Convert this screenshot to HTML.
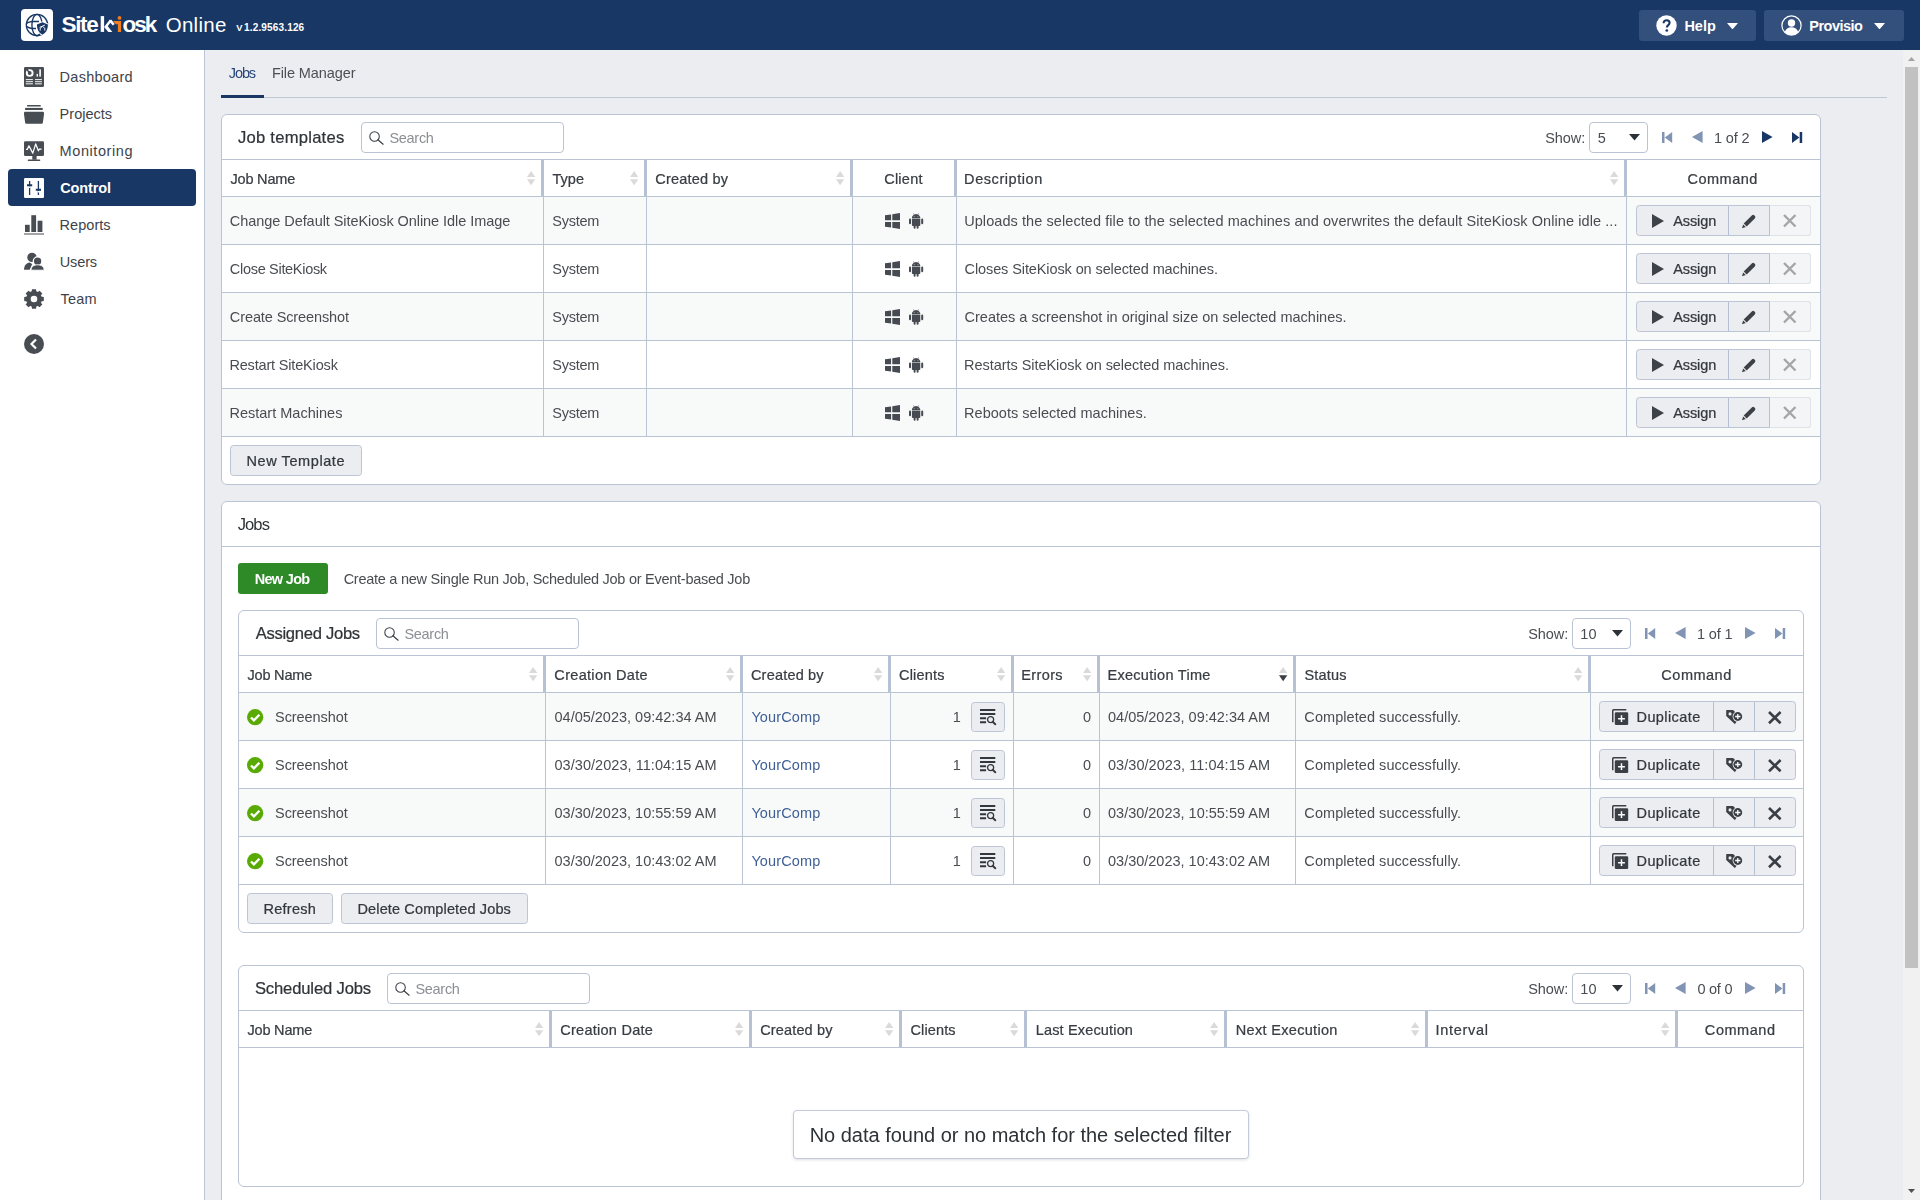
<!DOCTYPE html>
<html>
<head>
<meta charset="utf-8">
<title>SiteKiosk Online</title>
<style>
*{box-sizing:border-box;margin:0;padding:0}
html,body{width:1920px;height:1200px;overflow:hidden}
body{font-family:"Liberation Sans",sans-serif;font-size:14px;color:#494d52;background:#ecedf1;position:relative;letter-spacing:.35px}
svg{display:block}
.abs{position:absolute}
/* header */
#hdr{position:absolute;left:0;top:0;width:1920px;height:50px;background:#193765}
#logo{position:absolute;left:21px;top:9px;width:32px;height:32px;background:#fff;border-radius:4px}
.hbtn{position:absolute;background:#334f7b;border-radius:3px;color:#fff;font-weight:bold;font-size:14px}
.hbtn span{position:absolute;top:7px;white-space:nowrap}
/* sidebar */
#side{position:absolute;left:0;top:50px;width:204px;height:1150px;background:#fff}
#sideb{position:absolute;left:204px;top:50px;width:1px;height:1150px;background:#bcc5d5}
.nav{position:absolute;border-radius:4px}
.nav svg{position:absolute;left:16px;top:9px}
.nav span{position:absolute;left:52px;top:11px;font-size:14px;color:#3e434a;white-space:nowrap;letter-spacing:.45px}
.nav.act{background:#193765}
.nav.act span{color:#fff;font-weight:bold;letter-spacing:.2px}
/* scrollbar */
#sb{position:absolute;left:1903px;top:50px;width:17px;height:1150px;background:#f1f1f1}
#sbt{position:absolute;left:2px;top:17px;width:13px;height:901px;background:#c1c1c1}
#main{position:absolute;left:0;top:0;width:1903px;height:1200px;will-change:transform;overflow:hidden;pointer-events:none}
/* tabs */
#tabline{position:absolute;left:221px;top:97px;width:1666px;height:1px;background:#bec7d6}
#tabact{position:absolute;left:221px;top:95px;width:43px;height:3px;background:#193765}
/* panels */
.panel{position:absolute;background:#fff;border:1px solid #bac4d5;border-radius:6px}
.ptitle{position:absolute;font-size:17px;color:#33383e;white-space:nowrap;letter-spacing:.3px}
.search{position:absolute;width:203px;height:31px;border:1px solid #bac4d5;border-radius:4px;background:#fff}
.search span{position:absolute;left:28px;top:7px;color:#8b8f94;font-size:14px;letter-spacing:.45px}
.search svg{position:absolute;left:8px;top:8px}
.hline{position:absolute;height:1px;background:#bac4d5}
.vline{position:absolute;width:1px;background:#bac4d5}
.vth{position:absolute;width:3px;background:#b6c1d4}
.row{position:absolute;height:47px}
.row.odd{background:#f8faf9}
.t{position:absolute;white-space:nowrap;line-height:16px;letter-spacing:0}
.th{position:absolute;white-space:nowrap;font-weight:bold;color:#40454b;letter-spacing:.1px}
.btn{position:absolute;height:31px;background:#ecedf1;border:1px solid #bbc5d5;border-radius:3.5px;color:#33383e;white-space:nowrap}
.btn span{position:absolute;top:7px;font-weight:bold;letter-spacing:.05px}
.sel{position:absolute;width:59px;height:31px;border:1px solid #bac4d5;border-radius:4px;background:#fff}
.sel span{position:absolute;left:9px;top:7px;white-space:nowrap}
.bg{position:absolute;height:31px;background:#ecedf1;border:1px solid #bbc5d5;border-radius:3.5px;color:#33383e;white-space:nowrap}
.bg span{position:absolute;top:7px;font-weight:bold;letter-spacing:.05px}
.bgd{position:absolute;top:0;width:1px;height:29px;background:#b5c0d3}
.bgx{position:absolute;top:-1px;height:31px;background:#f4f5f7;border:1px solid #dfe3ea;border-left:none;border-radius:0 3.5px 3.5px 0}
</style>
</head>
<body>
<svg width="0" height="0" style="position:absolute"><defs>
<g id="i-search"><circle cx="5.550" cy="5.400" r="4.750" fill="none" stroke="#3a3f45" stroke-width="1.050"/><path d="M8.900 8.800L14.100 13.200" stroke="#3a3f45" stroke-width="1.200" stroke-linecap="round"/></g>
<g id="i-sort"><path d="M0 6L4.150 0l4.150 6z" fill="#dadada"/><path d="M0 8.300h8.300L4.150 14.200z" fill="#dadada"/></g>
<g id="i-sortd"><path d="M0 6L4.150 0l4.150 6z" fill="#dadada"/><path d="M0 8.300h8.300L4.150 14.200z" fill="#3a3f45"/></g>
<g id="i-win"><path d="M0 2.300L6.100 1.400V7.300H0zM7.300 1.200L15 0V7.300H7.300zM0 8.900H6.100V14.600L0 13.700zM7.300 8.900H15V16L7.300 14.800z"/></g>
<g id="i-and" transform="scale(1 .94)"><path d="M2.900 5.900h8.400v6.900q0 .9-.9.900h-.8v2.100q0 1-1 1t-1-1v-2.100H6.600v2.100q0 1-1 1t-1-1v-2.100h-.8q-.9 0-.9-.9zM0 6.900q0-1 1-1t1 1v4q0 1-1 1t-1-1zM12.200 6.900q0-1 1-1t1 1v4q0 1-1 1t-1-1zM2.900 5.200C3 3.500 3.900 2.400 5 1.800L4.200.4q-.1-.3.200-.3L5.300 1.500Q6.200 1.100 7.100 1.100T8.900 1.500L9.800.1q.3 0 .2.300L9.200 1.800c1.100.6 2 1.700 2.100 3.400zM5.200 3.100a.45.45 0 1 0 0 .9.45.45 0 1 0 0-.9zM9 3.100a.45.45 0 1 0 0 .9.45.45 0 1 0 0-.9z"/></g>
<g id="i-play"><path d="M0 0l12 7L0 14z"/></g>
<g id="i-pen"><path d="M1.700 9.500L9.800 1.400q1.300-1.300 2.600 0l.4.400q1.300 1.300 0 2.600L4.700 12.500zM1.100 10.400l2.700 2.700L0 14.200z"/></g>
<g id="i-x"><path d="M1 1l11.500 11.500M12.500 1L1 12.500" fill="none" stroke-width="2.400"/></g>
<g id="i-x2"><path d="M1 1l11.600 11.200M12.600 1L1 12.200" fill="none" stroke-width="2.600"/></g>
<g id="i-first"><rect x="0" y="0" width="2.500" height="11"/><path d="M10.200 0v11L2.800 5.500z"/></g>
<g id="i-prev"><path d="M10.600 0v12L0 6z"/></g>
<g id="i-next"><path d="M0 0v12l10.600-6z"/></g>
<g id="i-last"><rect x="7.700" y="0" width="2.500" height="11"/><path d="M0 0v11l7.400-5.500z"/></g>
<g id="i-caret"><path d="M0 0h11L5.500 6.400z"/></g>
<g id="i-ok"><circle cx="8.150" cy="8.150" r="8.150" fill="#59ab03"/><path d="M4 8.500l2.900 2.900L12.400 5.700" fill="none" stroke="#fff" stroke-width="2.300"/></g>
<g id="i-list"><path d="M0 1h15.300M0 5h15.300M0 9.250h6.100M0 13.250h6.100" fill="none" stroke="#33383e" stroke-width="2"/><circle cx="10.600" cy="10.600" r="3.050" fill="none" stroke="#33383e" stroke-width="1.300"/><path d="M12.900 13.100L15.300 15.200" stroke="#33383e" stroke-width="2" stroke-linecap="round"/></g>
<g id="i-dup"><path d="M0.750 13.200V1.500q0-.75.750-.75H14.300" fill="none" stroke="#3b4046" stroke-width="1.500"/><rect x="2.800" y="3.200" width="13.400" height="12.800" rx="1.200" fill="#3b4046"/><path d="M9.500 6.300v6.800M6.100 9.700h6.800" stroke="#fff" stroke-width="1.500"/></g>
<g id="i-tag"><path d="M.2 .6q0-.6.600-.6H7.100L13.800 6.700 9.400 13.600q-.6.600-1.200 0L.2 6.100z" fill="#3b4046"/><circle cx="4" cy="3.900" r="1.550" fill="#ecedf1"/><circle cx="11.800" cy="6.500" r="5.200" fill="#ecedf1"/><circle cx="11.800" cy="6.500" r="4.400" fill="#3b4046"/><path d="M11.800 3.900v5.200M9.200 6.500h5.200" stroke="#fff" stroke-width="1.300"/></g>
<g id="n-dash"><rect x="0" y="0" width="20" height="20" rx="1.200" fill="#484d53"/><circle cx="5.700" cy="6" r="2.900" fill="none" stroke="#fff" stroke-width="1.900"/><path d="M5.700 6L2.300 1.800" stroke="#484d53" stroke-width="1.500"/><rect x="12.600" y="6.900" width="1.400" height="2.700" fill="#fff"/><rect x="15.300" y="2.300" width="1.600" height="7.300" fill="#fff"/><path d="M1.800 12.600h7.100M1.800 14.700h7.100M1.800 16.800h7.100M11 12.600h6.900M11 14.700h6.900M11 16.800h6.900" stroke="#fff" stroke-width=".95"/></g>
<g id="n-proj"><rect x="3.100" y="1" width="13.600" height="1.500" fill="#484d53"/><rect x="1.100" y="3.900" width="17.600" height="2.100" fill="#484d53"/><path d="M0 8.900q0-1.100 1.100-1.100h17.800q1.100 0 1.100 1.100v1.400l-1.100 8.300q-.15 1.200-1.300 1.200H2.400q-1.150 0-1.300-1.200L0 10.300z" fill="#484d53"/></g>
<g id="n-mon"><rect x="0" y="0.200" width="20" height="14.700" rx="1.200" fill="#484d53"/><rect x="8.300" y="14.900" width="4.300" height="3.800" fill="#484d53"/><rect x="3.800" y="18.400" width="12.400" height="1.500" rx=".5" fill="#484d53"/><path d="M2 8.400h1.300L4.900 4.800l3.900 7.300 2.900-9.200 2.700 6.900 1-1.800h2.200" fill="none" stroke="#fff" stroke-width="1.250" stroke-linejoin="round"/></g>
<g id="n-ctrl"><rect width="20" height="20" rx="1.200" fill="#fff"/><path d="M5.600 3v14M14.400 3v14" stroke="#193765" stroke-width="1.300"/><path d="M3 7.200h5.200M11.800 11.800h5.200" stroke="#193765" stroke-width="2"/><path d="M5.600 8.500v1.500M14.400 13v1.500" stroke="#fff" stroke-width="1.400"/></g>
<g id="n-rep"><rect x="1" y="9.800" width="4.700" height="7.200" fill="#484d53"/><rect x="7.300" y="0.200" width="4.800" height="16.800" fill="#484d53"/><rect x="13.600" y="5.700" width="4.800" height="11.300" fill="#484d53"/><rect x="0" y="18.500" width="20" height="1" fill="#484d53"/></g>
<g id="n-users"><circle cx="8" cy="5.400" r="4.700" fill="#484d53"/><path d="M0 17.800c0-4.300 2.300-6.600 5.600-7.300l2.600 1.600-2.500 5.700z" fill="#484d53"/><circle cx="13.600" cy="9.200" r="4.300" fill="#484d53" stroke="#fff" stroke-width="1.300"/><path d="M7 18.200c.2-3.800 2.900-5.400 6.600-5.400s6.400 1.600 6.600 5.400z" fill="#484d53" stroke="#fff" stroke-width=".9"/></g>
<g id="n-team"><g fill="#484d53"><circle cx="10" cy="10" r="7.900"/><path d="M8 0.200h4l.5 3.500h-5z" transform="rotate(0 10 10)"/><path d="M8 0.200h4l.5 3.500h-5z" transform="rotate(45 10 10)"/><path d="M8 0.200h4l.5 3.500h-5z" transform="rotate(90 10 10)"/><path d="M8 0.200h4l.5 3.500h-5z" transform="rotate(135 10 10)"/><path d="M8 0.200h4l.5 3.500h-5z" transform="rotate(180 10 10)"/><path d="M8 0.200h4l.5 3.500h-5z" transform="rotate(225 10 10)"/><path d="M8 0.200h4l.5 3.500h-5z" transform="rotate(270 10 10)"/><path d="M8 0.200h4l.5 3.500h-5z" transform="rotate(315 10 10)"/></g><circle cx="10" cy="10" r="3.300" fill="#fff"/></g>
<g id="n-back"><circle cx="10" cy="10" r="10" fill="#484d53"/><path d="M12 5.500L7.500 10l4.500 4.500" fill="none" stroke="#fff" stroke-width="2.200"/></g>
</defs></svg>
<div id="hdr">
<div id="logo"><svg width="32" height="32" viewBox="0 0 32 32"><g fill="none" stroke="#193765" stroke-width="1.350"><circle cx="16" cy="16" r="10.700"/><ellipse cx="16" cy="16" rx="5.100" ry="10.700"/><path d="M5.700 14.200Q8 12.900 11 12.500H18M5.700 17.700Q8 19.100 11 19.500H15"/></g><path d="M21.400 12.200L27.800 14.800C28 20.600 25.800 24.500 21.400 26.900 17 24.500 14.800 20.600 15 14.800Z" fill="#fff"/><path d="M21.400 13.200L26.900 15.400C27 20.200 25.100 23.700 21.400 25.800 17.700 23.700 15.800 20.200 15.900 15.400Z" fill="#193765"/><path d="M19.200 21.600v-2.400l2.300-1.700 2.300 1.700v2.400M18.600 18.300l5.400-2.300" fill="none" stroke="#fff" stroke-width=".9"/></svg></div>
<div class="t" style="left:61.55px;top:12px;font-size:22.5px;line-height:25px;letter-spacing:-1.349px;font-weight:700;color:#fff;">Site</div>
<svg class="abs" style="left:100px;top:14px" width="23" height="19" viewBox="0 0 23 19"><rect x=".7" y="2.100" width="3.400" height="15.800" fill="#fff"/><path d="M4.100 12.900L9.800 5.400l2 1.500-4.900 6.300z" fill="#fff"/><path d="M9.200 7.200l2-1.700 3.500 4.400-1.900 1.600z" fill="#fff"/><path d="M4.300 13.300l2.600-2.200 5.400 6.800H8.300z" fill="#fff"/><circle cx="19.500" cy="3.900" r="1.850" fill="#f07d1e"/><path d="M12.900 7.050H21.100V17.900H17.900V10.200H15.900z" fill="#f07d1e"/></svg>
<div class="t" style="left:122.52px;top:12px;font-size:22.5px;line-height:25px;letter-spacing:-1.982px;font-weight:700;color:#fff;">osk</div>
<div class="t" style="left:165.68px;top:13px;font-size:20.5px;line-height:23px;letter-spacing:0.275px;color:#fff;">Online</div>
<div class="t" style="left:236.14px;top:23px;font-size:9.3px;line-height:10px;letter-spacing:0.200px;font-weight:700;color:#fff;">V</div>
<div class="t" style="left:244.07px;top:22px;font-size:10px;line-height:11px;letter-spacing:0.155px;font-weight:700;color:#fff;">1.2.9563.126</div>
<div class="hbtn" style="left:1639px;top:10px;width:117px;height:31px;"></div>
<svg class="abs" style="left:1656px;top:15px" width="21" height="21" viewBox="0 0 21 21"><circle cx="10.500" cy="10.500" r="10.200" fill="#fff"/><path d="M7.600 8.200c0-1.900 1.300-3 3-3s3 1 3 2.600c0 2.300-2.700 2.300-2.700 4.600" fill="none" stroke="#193765" stroke-width="2.100"/><circle cx="10.800" cy="15.500" r="1.350" fill="#193765"/></svg>
<div class="t" style="left:1684.43px;top:18px;font-size:14.5px;line-height:16px;letter-spacing:-0.019px;font-weight:700;color:#fff;">Help</div>
<svg class="abs" style="left:1727px;top:23px" width="11" height="6"><use href="#i-caret" fill="#fff"/></svg>
<div class="hbtn" style="left:1764px;top:10px;width:140px;height:31px;"></div>
<svg class="abs" style="left:1781px;top:15px" width="21" height="21" viewBox="0 0 21 21"><circle cx="10.500" cy="10.500" r="9.600" fill="none" stroke="#fff" stroke-width="1.200"/><circle cx="10.500" cy="8" r="3.700" fill="#fff"/><path d="M3.800 17c.8-3.200 3.400-4.800 6.700-4.800s5.900 1.600 6.700 4.800c-1.700 1.900-4.100 3-6.700 3s-5-1.100-6.700-3z" fill="#fff"/></svg>
<div class="t" style="left:1809.23px;top:18px;font-size:14.5px;line-height:16px;letter-spacing:-0.497px;font-weight:700;color:#fff;">Provisio</div>
<svg class="abs" style="left:1874px;top:23px" width="11" height="6"><use href="#i-caret" fill="#fff"/></svg>
</div>
<div id="side"></div><div id="sideb"></div>
<svg class="abs" style="left:24px;top:67px" width="20" height="20"><use href="#n-dash"/></svg>
<div class="t" style="left:59.61px;top:69px;font-size:14.5px;line-height:16px;letter-spacing:0.249px;color:#3e434a;">Dashboard</div>
<svg class="abs" style="left:24px;top:104px" width="20" height="20"><use href="#n-proj"/></svg>
<div class="t" style="left:59.61px;top:106px;font-size:14.5px;line-height:16px;letter-spacing:0.019px;color:#3e434a;">Projects</div>
<svg class="abs" style="left:24px;top:141px" width="20" height="20"><use href="#n-mon"/></svg>
<div class="t" style="left:59.61px;top:143px;font-size:14.5px;line-height:16px;letter-spacing:0.580px;color:#3e434a;">Monitoring</div>
<div class="nav act" style="left:8px;top:169px;width:188px;height:37px;"></div>
<svg class="abs" style="left:24px;top:178px" width="20" height="20"><use href="#n-ctrl"/></svg>
<div class="t" style="left:60.31px;top:180px;font-size:14.5px;line-height:16px;letter-spacing:-0.154px;font-weight:700;color:#fff;">Control</div>
<svg class="abs" style="left:24px;top:215px" width="20" height="20"><use href="#n-rep"/></svg>
<div class="t" style="left:59.61px;top:217px;font-size:14.5px;line-height:16px;letter-spacing:0.040px;color:#3e434a;">Reports</div>
<svg class="abs" style="left:24px;top:252px" width="20" height="20"><use href="#n-users"/></svg>
<div class="t" style="left:59.68px;top:254px;font-size:14.5px;line-height:16px;letter-spacing:-0.105px;color:#3e434a;">Users</div>
<svg class="abs" style="left:24px;top:289px" width="20" height="20"><use href="#n-team"/></svg>
<div class="t" style="left:60.47px;top:291px;font-size:14.5px;line-height:16px;letter-spacing:0.208px;color:#3e434a;">Team</div>
<svg class="abs" style="left:24px;top:334px" width="20" height="20"><use href="#n-back"/></svg>
<div id="sb"><div id="sbt"></div><svg class="abs" style="left:5px;top:7px" width="7" height="4"><path d="M0 4L3.500 0 7 4z" fill="#a3a3a3"/></svg><svg class="abs" style="left:5px;top:1139px" width="7" height="4"><path d="M0 0h7L3.500 4z" fill="#505050"/></svg></div>
<div id="main">
<div id="tabline"></div><div id="tabact"></div>
<div class="t" style="left:228.87px;top:65px;font-size:14.5px;line-height:16px;letter-spacing:-1.126px;color:#27457a;">Jobs</div>
<div class="t" style="left:271.91px;top:65px;font-size:14.5px;line-height:16px;letter-spacing:-0.090px;color:#4b5056;">File Manager</div>
<!-- PANEL1 -->
<div class="panel" style="left:221px;top:114px;width:1600px;height:371px;"></div>
<div class="t" style="left:237.94px;top:128px;font-size:16.6px;line-height:19px;letter-spacing:0.251px;-webkit-text-stroke:0.22px;color:#2f3439;">Job templates</div>
<div class="search" style="left:361px;top:122px;width:203px;height:31px;"></div><svg class="abs" style="left:369px;top:130.5px" width="15" height="15"><use href="#i-search"/></svg><div class="t" style="left:389.44px;top:130px;font-size:14.5px;line-height:16px;letter-spacing:-0.289px;color:#8b8f94;">Search</div>
<div class="t" style="left:1545.14px;top:130px;font-size:14.5px;line-height:16px;letter-spacing:-0.054px;">Show:</div><div class="sel" style="left:1589px;top:122px;width:59px;height:31px;"></div><div class="t" style="left:1597.82px;top:130px;font-size:14.5px;line-height:16px;letter-spacing:0.200px;">5</div><svg class="abs" style="left:1628.7px;top:134.1px" width="11" height="7"><use href="#i-caret" fill="#2d3237"/></svg><svg class="abs" style="left:1662px;top:132px" width="11" height="12"><use href="#i-first" fill="#8294b4"/></svg><svg class="abs" style="left:1691.6px;top:131.3px" width="11" height="13"><use href="#i-prev" fill="#8294b4"/></svg><div class="t" style="left:1714.00px;top:130px;font-size:14.5px;line-height:16px;letter-spacing:-0.129px;">1 of 2</div><svg class="abs" style="left:1761.8px;top:131.3px" width="11" height="13"><use href="#i-next" fill="#193765"/></svg><svg class="abs" style="left:1791.7px;top:132px" width="11" height="12"><use href="#i-last" fill="#193765"/></svg>
<div class="hline" style="left:222px;top:159px;width:1598px"></div>
<div class="hline" style="left:222px;top:196px;width:1598px"></div>
<div class="vth" style="left:541px;top:160px;height:36px"></div>
<div class="vth" style="left:644px;top:160px;height:36px"></div>
<div class="vth" style="left:850px;top:160px;height:36px"></div>
<div class="vth" style="left:954px;top:160px;height:36px"></div>
<div class="vth" style="left:1624px;top:160px;height:36px"></div>
<div class="t" style="left:230.47px;top:171px;font-size:14.5px;line-height:16px;letter-spacing:-0.188px;-webkit-text-stroke:0.24px;color:#383d43;">Job Name</div>
<svg class="abs" style="left:526.65px;top:171px" width="9" height="15"><use href="#i-sort"/></svg>
<div class="t" style="left:552.57px;top:171px;font-size:14.5px;line-height:16px;letter-spacing:-0.005px;-webkit-text-stroke:0.24px;color:#383d43;">Type</div>
<svg class="abs" style="left:629.65px;top:171px" width="9" height="15"><use href="#i-sort"/></svg>
<div class="t" style="left:655.36px;top:171px;font-size:14.5px;line-height:16px;letter-spacing:0.182px;-webkit-text-stroke:0.24px;color:#383d43;">Created by</div>
<svg class="abs" style="left:835.65px;top:171px" width="9" height="15"><use href="#i-sort"/></svg>
<div class="t" style="left:884.16px;top:171px;font-size:14.5px;line-height:16px;letter-spacing:0.254px;-webkit-text-stroke:0.24px;color:#383d43;">Client</div>
<div class="t" style="left:964.11px;top:171px;font-size:14.5px;line-height:16px;letter-spacing:0.560px;-webkit-text-stroke:0.24px;color:#383d43;">Description</div>
<svg class="abs" style="left:1609.65px;top:171px" width="9" height="15"><use href="#i-sort"/></svg>
<div class="t" style="left:1687.46px;top:171px;font-size:14.5px;line-height:16px;letter-spacing:0.498px;-webkit-text-stroke:0.24px;color:#383d43;">Command</div>
<div class="row odd" style="left:222px;top:197px;width:1598px;height:47px;"></div>
<div class="hline" style="left:222px;top:244px;width:1598px"></div>
<div class="t" style="left:229.86px;top:213px;font-size:14.5px;line-height:16px;letter-spacing:-0.062px;">Change Default SiteKiosk Online Idle Image</div>
<div class="t" style="left:552.24px;top:213px;font-size:14.5px;line-height:16px;letter-spacing:-0.256px;">System</div>
<svg class="abs" style="left:885px;top:213px" width="15" height="16"><use href="#i-win" fill="#464b51"/></svg>
<svg class="abs" style="left:909px;top:213px" width="15" height="17"><use href="#i-and" fill="#464b51"/></svg>
<div class="t" style="left:964.18px;top:213px;font-size:14.5px;line-height:16px;letter-spacing:0.075px;">Uploads the selected file to the selected machines and overwrites the default SiteKiosk Online idle ...</div>
<div class="bg" style="left:1636px;top:205px;width:175px;height:31px;"><div class="bgd" style="left:91px"></div><div class="bgd" style="left:132px"></div><div class="bgx" style="left:133px;width:41px"></div></div>
<svg class="abs" style="left:1652px;top:214px" width="12" height="14"><use href="#i-play" fill="#3d4248"/></svg>
<div class="t" style="left:1673.17px;top:213px;font-size:14.5px;line-height:16px;letter-spacing:-0.090px;-webkit-text-stroke:0.24px;color:#33383e;">Assign</div>
<svg class="abs" style="left:1742px;top:214px" width="15" height="15"><use href="#i-pen" fill="#3d4248"/></svg>
<svg class="abs" style="left:1783px;top:214px" width="14" height="14"><use href="#i-x" stroke="#a3a6a9"/></svg>
<div class="hline" style="left:222px;top:292px;width:1598px"></div>
<div class="t" style="left:229.86px;top:261px;font-size:14.5px;line-height:16px;letter-spacing:-0.309px;">Close SiteKiosk</div>
<div class="t" style="left:552.24px;top:261px;font-size:14.5px;line-height:16px;letter-spacing:-0.256px;">System</div>
<svg class="abs" style="left:885px;top:261px" width="15" height="16"><use href="#i-win" fill="#464b51"/></svg>
<svg class="abs" style="left:909px;top:261px" width="15" height="17"><use href="#i-and" fill="#464b51"/></svg>
<div class="t" style="left:964.56px;top:261px;font-size:14.5px;line-height:16px;letter-spacing:-0.101px;">Closes SiteKiosk on selected machines.</div>
<div class="bg" style="left:1636px;top:253px;width:175px;height:31px;"><div class="bgd" style="left:91px"></div><div class="bgd" style="left:132px"></div><div class="bgx" style="left:133px;width:41px"></div></div>
<svg class="abs" style="left:1652px;top:262px" width="12" height="14"><use href="#i-play" fill="#3d4248"/></svg>
<div class="t" style="left:1673.17px;top:261px;font-size:14.5px;line-height:16px;letter-spacing:-0.090px;-webkit-text-stroke:0.24px;color:#33383e;">Assign</div>
<svg class="abs" style="left:1742px;top:262px" width="15" height="15"><use href="#i-pen" fill="#3d4248"/></svg>
<svg class="abs" style="left:1783px;top:262px" width="14" height="14"><use href="#i-x" stroke="#a3a6a9"/></svg>
<div class="row odd" style="left:222px;top:293px;width:1598px;height:47px;"></div>
<div class="hline" style="left:222px;top:340px;width:1598px"></div>
<div class="t" style="left:229.86px;top:309px;font-size:14.5px;line-height:16px;letter-spacing:-0.110px;">Create Screenshot</div>
<div class="t" style="left:552.24px;top:309px;font-size:14.5px;line-height:16px;letter-spacing:-0.256px;">System</div>
<svg class="abs" style="left:885px;top:309px" width="15" height="16"><use href="#i-win" fill="#464b51"/></svg>
<svg class="abs" style="left:909px;top:309px" width="15" height="17"><use href="#i-and" fill="#464b51"/></svg>
<div class="t" style="left:964.56px;top:309px;font-size:14.5px;line-height:16px;letter-spacing:-0.001px;">Creates a screenshot in original size on selected machines.</div>
<div class="bg" style="left:1636px;top:301px;width:175px;height:31px;"><div class="bgd" style="left:91px"></div><div class="bgd" style="left:132px"></div><div class="bgx" style="left:133px;width:41px"></div></div>
<svg class="abs" style="left:1652px;top:310px" width="12" height="14"><use href="#i-play" fill="#3d4248"/></svg>
<div class="t" style="left:1673.17px;top:309px;font-size:14.5px;line-height:16px;letter-spacing:-0.090px;-webkit-text-stroke:0.24px;color:#33383e;">Assign</div>
<svg class="abs" style="left:1742px;top:310px" width="15" height="15"><use href="#i-pen" fill="#3d4248"/></svg>
<svg class="abs" style="left:1783px;top:310px" width="14" height="14"><use href="#i-x" stroke="#a3a6a9"/></svg>
<div class="hline" style="left:222px;top:388px;width:1598px"></div>
<div class="t" style="left:229.41px;top:357px;font-size:14.5px;line-height:16px;letter-spacing:-0.171px;">Restart SiteKiosk</div>
<div class="t" style="left:552.24px;top:357px;font-size:14.5px;line-height:16px;letter-spacing:-0.256px;">System</div>
<svg class="abs" style="left:885px;top:357px" width="15" height="16"><use href="#i-win" fill="#464b51"/></svg>
<svg class="abs" style="left:909px;top:357px" width="15" height="17"><use href="#i-and" fill="#464b51"/></svg>
<div class="t" style="left:964.11px;top:357px;font-size:14.5px;line-height:16px;letter-spacing:-0.050px;">Restarts SiteKiosk on selected machines.</div>
<div class="bg" style="left:1636px;top:349px;width:175px;height:31px;"><div class="bgd" style="left:91px"></div><div class="bgd" style="left:132px"></div><div class="bgx" style="left:133px;width:41px"></div></div>
<svg class="abs" style="left:1652px;top:358px" width="12" height="14"><use href="#i-play" fill="#3d4248"/></svg>
<div class="t" style="left:1673.17px;top:357px;font-size:14.5px;line-height:16px;letter-spacing:-0.090px;-webkit-text-stroke:0.24px;color:#33383e;">Assign</div>
<svg class="abs" style="left:1742px;top:358px" width="15" height="15"><use href="#i-pen" fill="#3d4248"/></svg>
<svg class="abs" style="left:1783px;top:358px" width="14" height="14"><use href="#i-x" stroke="#a3a6a9"/></svg>
<div class="row odd" style="left:222px;top:389px;width:1598px;height:47px;"></div>
<div class="hline" style="left:222px;top:436px;width:1598px"></div>
<div class="t" style="left:229.41px;top:405px;font-size:14.5px;line-height:16px;letter-spacing:0.013px;">Restart Machines</div>
<div class="t" style="left:552.24px;top:405px;font-size:14.5px;line-height:16px;letter-spacing:-0.256px;">System</div>
<svg class="abs" style="left:885px;top:405px" width="15" height="16"><use href="#i-win" fill="#464b51"/></svg>
<svg class="abs" style="left:909px;top:405px" width="15" height="17"><use href="#i-and" fill="#464b51"/></svg>
<div class="t" style="left:964.11px;top:405px;font-size:14.5px;line-height:16px;letter-spacing:0.018px;">Reboots selected machines.</div>
<div class="bg" style="left:1636px;top:397px;width:175px;height:31px;"><div class="bgd" style="left:91px"></div><div class="bgd" style="left:132px"></div><div class="bgx" style="left:133px;width:41px"></div></div>
<svg class="abs" style="left:1652px;top:406px" width="12" height="14"><use href="#i-play" fill="#3d4248"/></svg>
<div class="t" style="left:1673.17px;top:405px;font-size:14.5px;line-height:16px;letter-spacing:-0.090px;-webkit-text-stroke:0.24px;color:#33383e;">Assign</div>
<svg class="abs" style="left:1742px;top:406px" width="15" height="15"><use href="#i-pen" fill="#3d4248"/></svg>
<svg class="abs" style="left:1783px;top:406px" width="14" height="14"><use href="#i-x" stroke="#a3a6a9"/></svg>
<div class="vline" style="left:543px;top:197px;height:240px"></div>
<div class="vline" style="left:646px;top:197px;height:240px"></div>
<div class="vline" style="left:852px;top:197px;height:240px"></div>
<div class="vline" style="left:956px;top:197px;height:240px"></div>
<div class="vline" style="left:1626px;top:197px;height:240px"></div>
<div class="btn" style="left:230px;top:445px;width:132px;height:31px;"></div>
<div class="t" style="left:246.51px;top:453px;font-size:14.5px;line-height:16px;letter-spacing:0.584px;-webkit-text-stroke:0.24px;color:#33383e;">New Template</div>
<!-- PANEL2 -->
<div class="panel" style="left:221px;top:501px;width:1600px;height:720px;border-bottom-left-radius:0;border-bottom-right-radius:0"></div>
<div class="t" style="left:237.64px;top:515px;font-size:16.6px;line-height:19px;letter-spacing:-0.918px;color:#2f3439;">Jobs</div>
<div class="hline" style="left:222px;top:546px;width:1598px"></div>
<div class="abs" style="left:238px;top:563px;width:90px;height:31px;background:#2e8a27;border-radius:3px"></div>
<div class="t" style="left:254.73px;top:571px;font-size:14.5px;line-height:16px;letter-spacing:-0.693px;font-weight:700;color:#fff;">New Job</div>
<div class="t" style="left:343.66px;top:571px;font-size:14.5px;line-height:16px;letter-spacing:-0.264px;">Create a new Single Run Job, Scheduled Job or Event-based Job</div>
<div class="panel" style="left:238px;top:610px;width:1566px;height:323px;"></div>
<div class="t" style="left:255.67px;top:624px;font-size:16.6px;line-height:19px;letter-spacing:-0.286px;-webkit-text-stroke:0.22px;color:#2f3439;">Assigned Jobs</div>
<div class="search" style="left:376px;top:618px;width:203px;height:31px;"></div><svg class="abs" style="left:384px;top:626.5px" width="15" height="15"><use href="#i-search"/></svg><div class="t" style="left:404.44px;top:626px;font-size:14.5px;line-height:16px;letter-spacing:-0.289px;color:#8b8f94;">Search</div>
<div class="t" style="left:1528.14px;top:626px;font-size:14.5px;line-height:16px;letter-spacing:-0.054px;">Show:</div><div class="sel" style="left:1572px;top:618px;width:59px;height:31px;"></div><div class="t" style="left:1580.30px;top:626px;font-size:14.5px;line-height:16px;letter-spacing:0.200px;">10</div><svg class="abs" style="left:1611.7px;top:630.1px" width="11" height="7"><use href="#i-caret" fill="#2d3237"/></svg><svg class="abs" style="left:1645px;top:628px" width="11" height="12"><use href="#i-first" fill="#8294b4"/></svg><svg class="abs" style="left:1674.6px;top:627.3px" width="11" height="13"><use href="#i-prev" fill="#8294b4"/></svg><div class="t" style="left:1697.00px;top:626px;font-size:14.5px;line-height:16px;letter-spacing:-0.133px;">1 of 1</div><svg class="abs" style="left:1744.8px;top:627.3px" width="11" height="13"><use href="#i-next" fill="#8294b4"/></svg><svg class="abs" style="left:1774.7px;top:628px" width="11" height="12"><use href="#i-last" fill="#8294b4"/></svg>
<div class="hline" style="left:239px;top:655px;width:1564px"></div>
<div class="hline" style="left:239px;top:692px;width:1564px"></div>
<div class="vth" style="left:543px;top:656px;height:36px"></div>
<div class="vth" style="left:740px;top:656px;height:36px"></div>
<div class="vth" style="left:888px;top:656px;height:36px"></div>
<div class="vth" style="left:1011px;top:656px;height:36px"></div>
<div class="vth" style="left:1097px;top:656px;height:36px"></div>
<div class="vth" style="left:1293px;top:656px;height:36px"></div>
<div class="vth" style="left:1588px;top:656px;height:36px"></div>
<div class="t" style="left:247.47px;top:667px;font-size:14.5px;line-height:16px;letter-spacing:-0.188px;-webkit-text-stroke:0.24px;color:#383d43;">Job Name</div>
<svg class="abs" style="left:528.65px;top:667px" width="9" height="15"><use href="#i-sort"/></svg>
<div class="t" style="left:554.36px;top:667px;font-size:14.5px;line-height:16px;letter-spacing:0.310px;-webkit-text-stroke:0.24px;color:#383d43;">Creation Date</div>
<svg class="abs" style="left:725.65px;top:667px" width="9" height="15"><use href="#i-sort"/></svg>
<div class="t" style="left:750.96px;top:667px;font-size:14.5px;line-height:16px;letter-spacing:0.193px;-webkit-text-stroke:0.24px;color:#383d43;">Created by</div>
<svg class="abs" style="left:873.65px;top:667px" width="9" height="15"><use href="#i-sort"/></svg>
<div class="t" style="left:899.06px;top:667px;font-size:14.5px;line-height:16px;letter-spacing:0.190px;-webkit-text-stroke:0.24px;color:#383d43;">Clients</div>
<svg class="abs" style="left:996.65px;top:667px" width="9" height="15"><use href="#i-sort"/></svg>
<div class="t" style="left:1021.21px;top:667px;font-size:14.5px;line-height:16px;letter-spacing:0.388px;-webkit-text-stroke:0.24px;color:#383d43;">Errors</div>
<svg class="abs" style="left:1082.65px;top:667px" width="9" height="15"><use href="#i-sort"/></svg>
<div class="t" style="left:1107.41px;top:667px;font-size:14.5px;line-height:16px;letter-spacing:0.300px;-webkit-text-stroke:0.24px;color:#383d43;">Execution Time</div>
<svg class="abs" style="left:1278.65px;top:667px" width="9" height="15"><use href="#i-sortd"/></svg>
<div class="t" style="left:1304.44px;top:667px;font-size:14.5px;line-height:16px;letter-spacing:0.175px;-webkit-text-stroke:0.24px;color:#383d43;">Status</div>
<svg class="abs" style="left:1573.65px;top:667px" width="9" height="15"><use href="#i-sort"/></svg>
<div class="t" style="left:1661.36px;top:667px;font-size:14.5px;line-height:16px;letter-spacing:0.498px;-webkit-text-stroke:0.24px;color:#383d43;">Command</div>
<div class="row odd" style="left:239px;top:693px;width:1564px;height:47px;"></div>
<div class="hline" style="left:239px;top:740px;width:1564px"></div>
<svg class="abs" style="left:247px;top:709px" width="17" height="17"><use href="#i-ok"/></svg>
<div class="t" style="left:275.04px;top:709px;font-size:14.5px;line-height:16px;letter-spacing:-0.076px;">Screenshot</div>
<div class="t" style="left:554.53px;top:709px;font-size:14.5px;line-height:16px;letter-spacing:-0.004px;">04/05/2023, 09:42:34 AM</div>
<div class="t" style="left:751.38px;top:709px;font-size:14.5px;line-height:16px;letter-spacing:0.122px;color:#3f5f96;">YourComp</div>
<div class="t" style="left:952.84px;top:709px;font-size:14.5px;line-height:16px;letter-spacing:0.200px;">1</div>
<div class="btn" style="left:971px;top:702px;width:34px;height:30px;"></div>
<svg class="abs" style="left:979.9px;top:708.9px" width="17" height="17"><use href="#i-list"/></svg>
<div class="t" style="left:1083.10px;top:709px;font-size:14.5px;line-height:16px;letter-spacing:0.200px;">0</div>
<div class="t" style="left:1108.03px;top:709px;font-size:14.5px;line-height:16px;letter-spacing:-0.004px;">04/05/2023, 09:42:34 AM</div>
<div class="t" style="left:1304.36px;top:709px;font-size:14.5px;line-height:16px;letter-spacing:0.059px;">Completed successfully.</div>
<div class="bg" style="left:1599px;top:701px;width:197px;height:31px;"><div class="bgd" style="left:113px"></div><div class="bgd" style="left:154px"></div></div>
<svg class="abs" style="left:1611.8px;top:708.9px" width="17" height="17"><use href="#i-dup"/></svg>
<div class="t" style="left:1636.51px;top:709px;font-size:14.5px;line-height:16px;letter-spacing:0.411px;-webkit-text-stroke:0.24px;color:#33383e;">Duplicate</div>
<svg class="abs" style="left:1725.8px;top:710px" width="17" height="15"><use href="#i-tag"/></svg>
<svg class="abs" style="left:1768px;top:710.6px" width="14" height="14"><use href="#i-x2" stroke="#3a3f45"/></svg>
<div class="hline" style="left:239px;top:788px;width:1564px"></div>
<svg class="abs" style="left:247px;top:757px" width="17" height="17"><use href="#i-ok"/></svg>
<div class="t" style="left:275.04px;top:757px;font-size:14.5px;line-height:16px;letter-spacing:-0.076px;">Screenshot</div>
<div class="t" style="left:554.53px;top:757px;font-size:14.5px;line-height:16px;letter-spacing:0.045px;">03/30/2023, 11:04:15 AM</div>
<div class="t" style="left:751.38px;top:757px;font-size:14.5px;line-height:16px;letter-spacing:0.122px;color:#3f5f96;">YourComp</div>
<div class="t" style="left:952.84px;top:757px;font-size:14.5px;line-height:16px;letter-spacing:0.200px;">1</div>
<div class="btn" style="left:971px;top:750px;width:34px;height:30px;"></div>
<svg class="abs" style="left:979.9px;top:756.9px" width="17" height="17"><use href="#i-list"/></svg>
<div class="t" style="left:1083.10px;top:757px;font-size:14.5px;line-height:16px;letter-spacing:0.200px;">0</div>
<div class="t" style="left:1108.03px;top:757px;font-size:14.5px;line-height:16px;letter-spacing:0.045px;">03/30/2023, 11:04:15 AM</div>
<div class="t" style="left:1304.36px;top:757px;font-size:14.5px;line-height:16px;letter-spacing:0.059px;">Completed successfully.</div>
<div class="bg" style="left:1599px;top:749px;width:197px;height:31px;"><div class="bgd" style="left:113px"></div><div class="bgd" style="left:154px"></div></div>
<svg class="abs" style="left:1611.8px;top:756.9px" width="17" height="17"><use href="#i-dup"/></svg>
<div class="t" style="left:1636.51px;top:757px;font-size:14.5px;line-height:16px;letter-spacing:0.411px;-webkit-text-stroke:0.24px;color:#33383e;">Duplicate</div>
<svg class="abs" style="left:1725.8px;top:758px" width="17" height="15"><use href="#i-tag"/></svg>
<svg class="abs" style="left:1768px;top:758.6px" width="14" height="14"><use href="#i-x2" stroke="#3a3f45"/></svg>
<div class="row odd" style="left:239px;top:789px;width:1564px;height:47px;"></div>
<div class="hline" style="left:239px;top:836px;width:1564px"></div>
<svg class="abs" style="left:247px;top:805px" width="17" height="17"><use href="#i-ok"/></svg>
<div class="t" style="left:275.04px;top:805px;font-size:14.5px;line-height:16px;letter-spacing:-0.076px;">Screenshot</div>
<div class="t" style="left:554.53px;top:805px;font-size:14.5px;line-height:16px;letter-spacing:-0.004px;">03/30/2023, 10:55:59 AM</div>
<div class="t" style="left:751.38px;top:805px;font-size:14.5px;line-height:16px;letter-spacing:0.122px;color:#3f5f96;">YourComp</div>
<div class="t" style="left:952.84px;top:805px;font-size:14.5px;line-height:16px;letter-spacing:0.200px;">1</div>
<div class="btn" style="left:971px;top:798px;width:34px;height:30px;"></div>
<svg class="abs" style="left:979.9px;top:804.9px" width="17" height="17"><use href="#i-list"/></svg>
<div class="t" style="left:1083.10px;top:805px;font-size:14.5px;line-height:16px;letter-spacing:0.200px;">0</div>
<div class="t" style="left:1108.03px;top:805px;font-size:14.5px;line-height:16px;letter-spacing:-0.004px;">03/30/2023, 10:55:59 AM</div>
<div class="t" style="left:1304.36px;top:805px;font-size:14.5px;line-height:16px;letter-spacing:0.059px;">Completed successfully.</div>
<div class="bg" style="left:1599px;top:797px;width:197px;height:31px;"><div class="bgd" style="left:113px"></div><div class="bgd" style="left:154px"></div></div>
<svg class="abs" style="left:1611.8px;top:804.9px" width="17" height="17"><use href="#i-dup"/></svg>
<div class="t" style="left:1636.51px;top:805px;font-size:14.5px;line-height:16px;letter-spacing:0.411px;-webkit-text-stroke:0.24px;color:#33383e;">Duplicate</div>
<svg class="abs" style="left:1725.8px;top:806px" width="17" height="15"><use href="#i-tag"/></svg>
<svg class="abs" style="left:1768px;top:806.6px" width="14" height="14"><use href="#i-x2" stroke="#3a3f45"/></svg>
<div class="hline" style="left:239px;top:884px;width:1564px"></div>
<svg class="abs" style="left:247px;top:853px" width="17" height="17"><use href="#i-ok"/></svg>
<div class="t" style="left:275.04px;top:853px;font-size:14.5px;line-height:16px;letter-spacing:-0.076px;">Screenshot</div>
<div class="t" style="left:554.53px;top:853px;font-size:14.5px;line-height:16px;letter-spacing:-0.004px;">03/30/2023, 10:43:02 AM</div>
<div class="t" style="left:751.38px;top:853px;font-size:14.5px;line-height:16px;letter-spacing:0.122px;color:#3f5f96;">YourComp</div>
<div class="t" style="left:952.84px;top:853px;font-size:14.5px;line-height:16px;letter-spacing:0.200px;">1</div>
<div class="btn" style="left:971px;top:846px;width:34px;height:30px;"></div>
<svg class="abs" style="left:979.9px;top:852.9px" width="17" height="17"><use href="#i-list"/></svg>
<div class="t" style="left:1083.10px;top:853px;font-size:14.5px;line-height:16px;letter-spacing:0.200px;">0</div>
<div class="t" style="left:1108.03px;top:853px;font-size:14.5px;line-height:16px;letter-spacing:-0.004px;">03/30/2023, 10:43:02 AM</div>
<div class="t" style="left:1304.36px;top:853px;font-size:14.5px;line-height:16px;letter-spacing:0.059px;">Completed successfully.</div>
<div class="bg" style="left:1599px;top:845px;width:197px;height:31px;"><div class="bgd" style="left:113px"></div><div class="bgd" style="left:154px"></div></div>
<svg class="abs" style="left:1611.8px;top:852.9px" width="17" height="17"><use href="#i-dup"/></svg>
<div class="t" style="left:1636.51px;top:853px;font-size:14.5px;line-height:16px;letter-spacing:0.411px;-webkit-text-stroke:0.24px;color:#33383e;">Duplicate</div>
<svg class="abs" style="left:1725.8px;top:854px" width="17" height="15"><use href="#i-tag"/></svg>
<svg class="abs" style="left:1768px;top:854.6px" width="14" height="14"><use href="#i-x2" stroke="#3a3f45"/></svg>
<div class="vline" style="left:545px;top:693px;height:192px"></div>
<div class="vline" style="left:742px;top:693px;height:192px"></div>
<div class="vline" style="left:890px;top:693px;height:192px"></div>
<div class="vline" style="left:1013px;top:693px;height:192px"></div>
<div class="vline" style="left:1099px;top:693px;height:192px"></div>
<div class="vline" style="left:1295px;top:693px;height:192px"></div>
<div class="vline" style="left:1590px;top:693px;height:192px"></div>
<div class="btn" style="left:247px;top:893px;width:86px;height:31px;"></div>
<div class="t" style="left:263.51px;top:901px;font-size:14.5px;line-height:16px;letter-spacing:0.260px;-webkit-text-stroke:0.24px;color:#33383e;">Refresh</div>
<div class="btn" style="left:341px;top:893px;width:187px;height:31px;"></div>
<div class="t" style="left:357.51px;top:901px;font-size:14.5px;line-height:16px;letter-spacing:0.130px;-webkit-text-stroke:0.24px;color:#33383e;">Delete Completed Jobs</div>
<div class="panel" style="left:238px;top:965px;width:1566px;height:222px;"></div>
<div class="t" style="left:254.95px;top:979px;font-size:16.6px;line-height:19px;letter-spacing:-0.144px;-webkit-text-stroke:0.22px;color:#2f3439;">Scheduled Jobs</div>
<div class="search" style="left:387px;top:973px;width:203px;height:31px;"></div><svg class="abs" style="left:395px;top:981.5px" width="15" height="15"><use href="#i-search"/></svg><div class="t" style="left:415.44px;top:981px;font-size:14.5px;line-height:16px;letter-spacing:-0.289px;color:#8b8f94;">Search</div>
<div class="t" style="left:1528.14px;top:981px;font-size:14.5px;line-height:16px;letter-spacing:-0.054px;">Show:</div><div class="sel" style="left:1572px;top:973px;width:59px;height:31px;"></div><div class="t" style="left:1580.30px;top:981px;font-size:14.5px;line-height:16px;letter-spacing:0.200px;">10</div><svg class="abs" style="left:1611.7px;top:985.1px" width="11" height="7"><use href="#i-caret" fill="#2d3237"/></svg><svg class="abs" style="left:1645px;top:983px" width="11" height="12"><use href="#i-first" fill="#8294b4"/></svg><svg class="abs" style="left:1674.6px;top:982.3px" width="11" height="13"><use href="#i-prev" fill="#8294b4"/></svg><div class="t" style="left:1697.53px;top:981px;font-size:14.5px;line-height:16px;letter-spacing:-0.269px;">0 of 0</div><svg class="abs" style="left:1744.8px;top:982.3px" width="11" height="13"><use href="#i-next" fill="#8294b4"/></svg><svg class="abs" style="left:1774.7px;top:983px" width="11" height="12"><use href="#i-last" fill="#8294b4"/></svg>
<div class="hline" style="left:239px;top:1010px;width:1564px"></div>
<div class="hline" style="left:239px;top:1047px;width:1564px"></div>
<div class="vth" style="left:549px;top:1011px;height:36px"></div>
<div class="vth" style="left:749px;top:1011px;height:36px"></div>
<div class="vth" style="left:899px;top:1011px;height:36px"></div>
<div class="vth" style="left:1024px;top:1011px;height:36px"></div>
<div class="vth" style="left:1224px;top:1011px;height:36px"></div>
<div class="vth" style="left:1425px;top:1011px;height:36px"></div>
<div class="vth" style="left:1675px;top:1011px;height:36px"></div>
<div class="t" style="left:247.47px;top:1022px;font-size:14.5px;line-height:16px;letter-spacing:-0.188px;-webkit-text-stroke:0.24px;color:#383d43;">Job Name</div>
<svg class="abs" style="left:534.75px;top:1022px" width="9" height="15"><use href="#i-sort"/></svg>
<div class="t" style="left:560.26px;top:1022px;font-size:14.5px;line-height:16px;letter-spacing:0.268px;-webkit-text-stroke:0.24px;color:#383d43;">Creation Date</div>
<svg class="abs" style="left:734.75px;top:1022px" width="9" height="15"><use href="#i-sort"/></svg>
<div class="t" style="left:760.26px;top:1022px;font-size:14.5px;line-height:16px;letter-spacing:0.137px;-webkit-text-stroke:0.24px;color:#383d43;">Created by</div>
<svg class="abs" style="left:884.75px;top:1022px" width="9" height="15"><use href="#i-sort"/></svg>
<div class="t" style="left:910.46px;top:1022px;font-size:14.5px;line-height:16px;letter-spacing:0.140px;-webkit-text-stroke:0.24px;color:#383d43;">Clients</div>
<svg class="abs" style="left:1009.75px;top:1022px" width="9" height="15"><use href="#i-sort"/></svg>
<div class="t" style="left:1035.71px;top:1022px;font-size:14.5px;line-height:16px;letter-spacing:0.163px;-webkit-text-stroke:0.24px;color:#383d43;">Last Execution</div>
<svg class="abs" style="left:1209.75px;top:1022px" width="9" height="15"><use href="#i-sort"/></svg>
<div class="t" style="left:1235.81px;top:1022px;font-size:14.5px;line-height:16px;letter-spacing:0.316px;-webkit-text-stroke:0.24px;color:#383d43;">Next Execution</div>
<svg class="abs" style="left:1410.75px;top:1022px" width="9" height="15"><use href="#i-sort"/></svg>
<div class="t" style="left:1435.46px;top:1022px;font-size:14.5px;line-height:16px;letter-spacing:0.723px;-webkit-text-stroke:0.24px;color:#383d43;">Interval</div>
<svg class="abs" style="left:1660.75px;top:1022px" width="9" height="15"><use href="#i-sort"/></svg>
<div class="t" style="left:1704.86px;top:1022px;font-size:14.5px;line-height:16px;letter-spacing:0.548px;-webkit-text-stroke:0.24px;color:#383d43;">Command</div>
<div class="abs" style="left:793px;top:1110px;width:456px;height:49px;background:#fff;border:1px solid #c3cad8;border-radius:4px;box-shadow:0 1px 3px rgba(0,0,0,.13)"></div>
<div class="t" style="left:809.66px;top:1124px;font-size:20px;line-height:22px;letter-spacing:-0.016px;color:#2d3237;">No data found or no match for the selected filter</div>
</div>
</body>
</html>
